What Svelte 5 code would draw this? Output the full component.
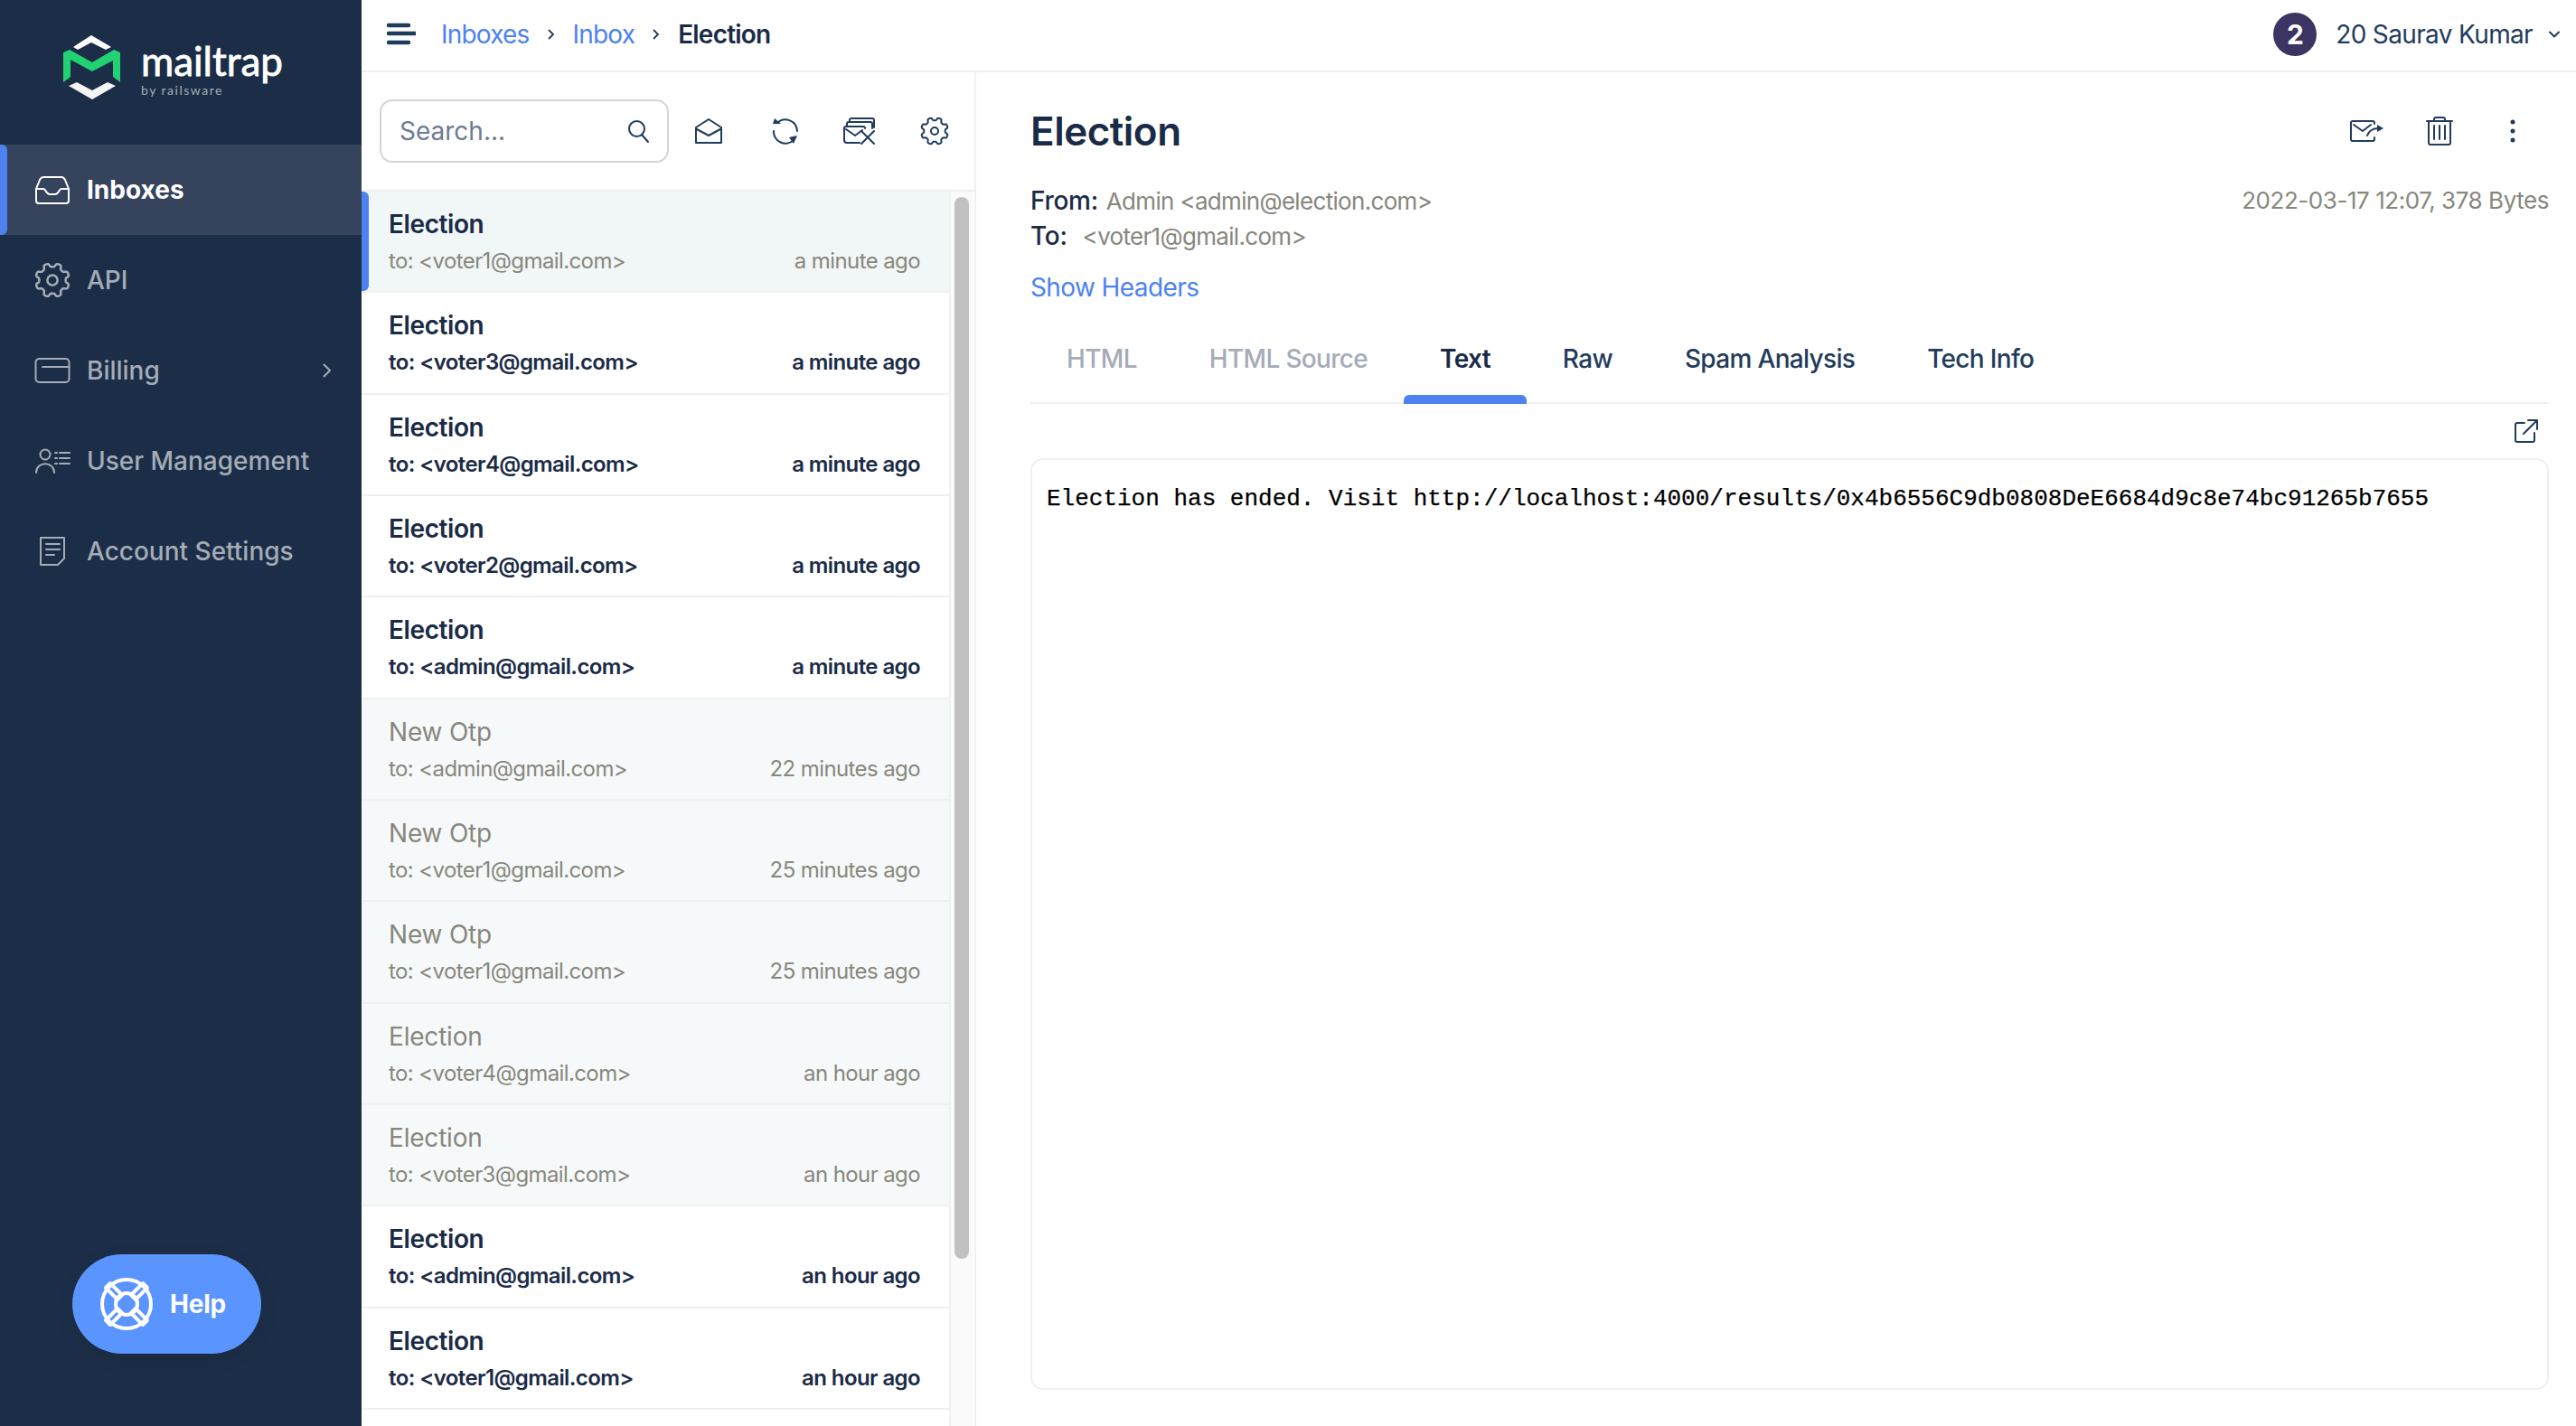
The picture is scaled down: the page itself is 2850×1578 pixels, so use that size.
<script>
  // message list
  const messages = [
    { subject: 'Election', to: 'voter1', ago: 'a minute ago', read: true, active: true },
    { subject: 'Election', to: 'voter3', ago: 'a minute ago' },
    { subject: 'Election', to: 'voter4', ago: 'a minute ago' },
    { subject: 'Election', to: 'voter2', ago: 'a minute ago' },
    { subject: 'Election', to: 'admin', ago: 'a minute ago' },
    { subject: 'New Otp', to: 'admin', ago: '22 minutes ago', read: true },
    { subject: 'New Otp', to: 'voter1', ago: '25 minutes ago', read: true },
    { subject: 'New Otp', to: 'voter1', ago: '25 minutes ago', read: true },
    { subject: 'Election', to: 'voter4', ago: 'an hour ago', read: true },
    { subject: 'Election', to: 'voter3', ago: 'an hour ago', read: true },
    { subject: 'Election', to: 'admin', ago: 'an hour ago' },
    { subject: 'Election', to: 'voter1', ago: 'an hour ago' }
  ];

  const tabs = ['HTML', 'HTML Source', 'Text', 'Raw', 'Spam Analysis', 'Tech Info'];

  // scalloped gear outline, 8 lobes round (16,16)
  function gear_path() {
    const pts = [];
    for (let i = 0; i < 160; i++) {
      const a = (i / 160) * Math.PI * 2;
      const r = 13.4 + 1.7 * Math.tanh(2.2 * Math.cos(8 * a + Math.PI / 8 * 8));
      pts.push(`${(16 + r * Math.cos(a)).toFixed(2)} ${(16 + r * Math.sin(a)).toFixed(2)}`);
    }
    return `M${pts.join('L')}Z`;
  }
  const gear = gear_path();
</script>

<div class="page">
  <aside class="sidebar">
    <div class="logo">
      <svg width="66" height="74" viewBox="0 0 66 74">
        <path d="M32 1 54 14 48 17 32 9 17 17 12 14Z" fill="#fff" />
        <path d="M1 20 8 17 33 31 57 17 64 20V53L56 47V29L33 41 9 28V47L1 53Z" fill="#22d172" />
        <path d="M7 57 16 53 33 62 50 53 59 57 33 72Z" fill="#f4f4f4" />
      </svg>
      <div class="wordmark">
        <span class="word">mailtrap</span>
        <span class="by">by railsware</span>
      </div>
    </div>

    <nav class="nav">
      <div class="nav-item active">
        <svg width="40" height="32" viewBox="0 0 40 32" class="stroke">
          <path d="M10 2h20c2 0 3 1 4 3l4 10v13a3 3 0 0 1-3 3H5a3 3 0 0 1-3-3V15L6 5c1-2 2-3 4-3z" />
          <path d="M2 15h8c3 0 3 6 7 6h6c4 0 4-6 7-6h8" />
        </svg>
        <span>Inboxes</span>
      </div>
      <div class="nav-item">
        <svg width="40" height="40" viewBox="0 0 32 32" class="stroke thin"><path d={gear} /><circle cx="16" cy="16" r="4.500" /></svg>
        <span>API</span>
      </div>
      <div class="nav-item">
        <svg width="40" height="30" viewBox="0 0 40 30" class="stroke">
          <rect x="1.500" y="2" width="37" height="26" rx="4" />
          <path d="M9 11h29.500" />
        </svg>
        <span>Billing</span>
        <svg class="chev stroke" width="10" height="16" viewBox="0 0 10 16"><path d="M1.500 1.500 8 8l-6.500 6.500" /></svg>
      </div>
      <div class="nav-item">
        <svg width="40" height="30" viewBox="0 0 40 30" class="stroke">
          <circle cx="12" cy="8" r="5.500" />
          <path d="M2 28c0-13 20-13 20 0" />
          <path d="M28 6h11M28 12h11M28 18h11" />
          <path d="M23 6h2M23 12h2M23 18h2" />
        </svg>
        <span>User Management</span>
      </div>
      <div class="nav-item">
        <svg width="40" height="34" viewBox="0 0 40 34" class="stroke">
          <path d="M7 2h26v23l-7 7H7z" />
          <path d="M13 9h15M13 15h15M13 21h9" />
        </svg>
        <span>Account Settings</span>
      </div>
    </nav>

    <div class="help">
      <svg width="60" height="60" viewBox="0 0 60 60" class="help-icon">
        <circle cx="30" cy="30" r="27" />
        <circle cx="30" cy="30" r="12" />
        <path d="M7 12 12 7 25 20 20 25zM48 7l5 5-13 13-5-5zM53 48l-5 5-13-13 5-5zM12 53l-5-5 13-13 5 5z" />
      </svg>
      <span>Help</span>
    </div>
  </aside>

  <div class="main">
    <header class="topbar">
      <svg class="burger" width="32" height="26" viewBox="0 0 32 26">
        <path d="M2 3h22M2 12h30M2 22h22" />
      </svg>
      <span class="crumb">Inboxes</span>
      <svg class="sep" width="8" height="14" viewBox="0 0 8 14"><path d="M1 2l5 5-5 5" /></svg>
      <span class="crumb">Inbox</span>
      <svg class="sep" width="8" height="14" viewBox="0 0 8 14"><path d="M1 2l5 5-5 5" /></svg>
      <span class="crumb current">Election</span>
      <div class="user">
        <span class="avatar">2</span>
        <span class="user-name">20 Saurav Kumar</span>
        <svg width="12" height="8" viewBox="0 0 12 8" class="icon"><path d="M1 1.500 6 6.500 11 1.500" /></svg>
      </div>
    </header>

    <div class="body">
      <section class="list-panel">
        <div class="toolbar">
          <div class="search">
            <span class="placeholder">Search...</span>
            <svg width="26" height="28" viewBox="0 0 26 28" class="icon">
              <circle cx="11.500" cy="11.500" r="8.500" />
              <path d="M17.500 18.500 24 26" />
            </svg>
          </div>
          <svg width="30" height="28" viewBox="0 0 30 28" class="icon t1">
            <path d="M15 1 1 10v17h28V10z" />
            <path d="M2 12l13 7 13-7" />
          </svg>
          <svg width="30" height="30" viewBox="0 0 30 30" class="icon t2">
            <path d="M6 6a13 13 0 0 1 22 9M2 15a13 13 0 0 0 22 10" />
            <path d="M1 7l2-6 7 6zM28 20l-9 2 5 7z" class="solid" />
          </svg>
          <svg width="36" height="30" viewBox="0 0 36 30" class="icon t3">
            <path d="M1 25V12a2 2 0 0 1 2-2h19a2 2 0 0 1 2 2M1 25a3 3 0 0 0 3 3h14" />
            <path d="M4 10V7a2 2 0 0 1 2-2h24a2 2 0 0 1 2 2v5" />
            <path d="M7 5V3a2 2 0 0 1 2-2h23a2 2 0 0 1 2 2v8" />
            <path d="M3 13l10 7 8-6" />
            <path d="M20 15l14 14M34 15 20 29" />
          </svg>
          <svg width="32" height="32" viewBox="0 0 32 32" class="icon t4"><path d={gear} /><circle cx="16" cy="16" r="4" /></svg>
        </div>

        <div class="list-wrap">
          <ul class="list">
            {#each messages as m}
              <li class="row" class:read={m.read} class:active={m.active}>
                <div class="subject">{m.subject}</div>
                <div class="meta">
                  <span>to: &lt;{m.to}@gmail.com&gt;</span>
                  <span>{m.ago}</span>
                </div>
              </li>
            {/each}
          </ul>
          <div class="scrollbar"><div class="thumb"></div></div>
        </div>
      </section>

      <section class="detail">
        <div class="title-row">
          <h1>Election</h1>
          <div class="actions">
            <svg width="38" height="24" viewBox="0 0 38 24" class="icon">
              <path d="M27 4V3a2 2 0 0 0-2-2H3a2 2 0 0 0-2 2v18a2 2 0 0 0 2 2h22a2 2 0 0 0 2-2v-2" />
              <path d="M4 5l10 7 9-7" />
              <path d="M19 17c2-5 6-8 12-8" />
              <path d="M30 5l7 4-7 4z" class="solid" />
            </svg>
            <svg width="30" height="32" viewBox="0 0 30 32" class="icon">
              <path d="M1 5h28M9 5V3a2 2 0 0 1 2-2h8a2 2 0 0 1 2 2v2" />
              <path d="M3 5v24a2 2 0 0 0 2 2h20a2 2 0 0 0 2-2V5" />
              <path d="M9 10v15M15 10v15M21 10v15" />
            </svg>
            <svg width="6" height="26" viewBox="0 0 6 26" class="dots">
              <circle cx="3" cy="3" r="2.500" /><circle cx="3" cy="13" r="2.500" /><circle cx="3" cy="23" r="2.500" />
            </svg>
          </div>
        </div>

        <div class="head-row">
          <div>
            <div class="addr"><b>From:</b><span class="from">Admin &lt;admin@election.com&gt;</span></div>
            <div class="addr"><b>To:</b><span class="to">&lt;voter1@gmail.com&gt;</span></div>
          </div>
          <div class="stamp">2022-03-17 12:07, 378 Bytes</div>
        </div>

        <div class="show">Show Headers</div>

        <div class="tabs">
          {#each tabs as t}
            <div class="tab" class:on={t === 'Text'} class:muted={t === 'HTML' || t === 'HTML Source'}>{t}</div>
          {/each}
        </div>

        <div class="open-row">
          <svg width="26" height="26" viewBox="0 0 26 26" class="icon">
            <path d="M11 4H3a2 2 0 0 0-2 2v17a2 2 0 0 0 2 2h17a2 2 0 0 0 2-2v-8" />
            <path d="M10 16 24 2M15 1h10v10" />
          </svg>
        </div>

        <div class="text-box">
          <pre>Election has ended. Visit http://localhost:4000/results/0x4b6556C9db0808DeE6684d9c8e74bc91265b7655</pre>
        </div>
      </section>
    </div>
  </div>
</div>

<style>
  :global(body) {
    margin: 0;
    background: #fff;
  }

  .page {
    display: flex;
    width: 2850px;
    height: 1578px;
    overflow: hidden;
    font-family: Inter, "Liberation Sans", sans-serif;
    color: #1a2b47;
  }

  /* sidebar */
  .sidebar {
    width: 400px;
    flex: none;
    display: flex;
    flex-direction: column;
    background: #1c2e47;
  }

  .logo {
    height: 160px;
    box-sizing: border-box;
    padding: 38px 0 0 69px;
    display: flex;
    gap: 21px;
    color: #fff;
  }

  .wordmark {
    display: flex;
    flex-direction: column;
    padding-top: 8px;
  }

  .word {
    font-family: Lato, sans-serif;
    font-size: 44px;
    line-height: 42px;
    font-weight: 400;
    -webkit-text-stroke: 0.8px #fff;
  }

  .by {
    font-family: Lato, sans-serif;
    font-size: 14px;
    line-height: 17px;
    letter-spacing: 1.500px;
    margin-top: 3px;
    color: #a4acb7;
  }

  .nav {
    display: flex;
    flex-direction: column;
  }

  .nav-item {
    height: 100px;
    display: flex;
    align-items: center;
    box-sizing: border-box;
    position: relative;
    padding-left: 96px;
    font-size: 28px;
    font-weight: 500;
    color: #a4acb7;
  }

  .nav-item svg:first-child {
    position: absolute;
    left: 38px;
    top: 50%;
    transform: translateY(-50%);
  }

  .nav-item.active {
    background: #36435d;
    color: #fff;
    font-weight: 700;
  }

  .nav-item.active::before,
  .row.active::before {
    content: "";
    position: absolute;
    left: 0;
    top: 0;
    bottom: 0;
    width: 8px;
    background: #4d82f0;
    border-radius: 0 6px 6px 0;
  }

  .stroke {
    fill: none;
    stroke: currentColor;
    stroke-width: 2;
    stroke-linejoin: round;
    stroke-linecap: round;
  }

  .chev {
    margin-left: auto;
    margin-right: 33px;
  }

  .help {
    margin: auto 0 80px 80px;
    width: 209px;
    height: 110px;
    border-radius: 55px;
    box-sizing: border-box;
    padding-left: 30px;
    display: flex;
    align-items: center;
    gap: 18px;
    background: #5a94ff;
    color: #fff;
    font-size: 28px;
    font-weight: 700;
    letter-spacing: -0.2px;
    box-shadow: 0 6px 20px rgba(0, 0, 0, 0.1);
  }

  .help-icon {
    fill: none;
    stroke: #fff;
    stroke-width: 4;
    stroke-linejoin: round;
  }

  /* top bar */
  .main {
    flex: 1;
    min-width: 0;
    display: flex;
    flex-direction: column;
  }

  .topbar {
    height: 80px;
    flex: none;
    box-sizing: border-box;
    border-bottom: 2px solid #f0f0f0;
    padding: 0 18px 2px 28px;
    display: flex;
    align-items: center;
    font-size: 28px;
    letter-spacing: -0.8px;
  }

  .burger {
    fill: none;
    stroke: #1f3c5c;
    stroke-width: 4.500;
    stroke-linecap: round;
    margin-right: 28px;
  }

  .crumb {
    color: #4d82f0;
  }

  .crumb.current {
    color: #1a2b47;
    font-weight: 600;
  }

  .sep {
    margin: 0 20px;
    fill: none;
    stroke: #1f3c5c;
    stroke-width: 1.800;
  }

  .user {
    margin-left: auto;
    display: flex;
    align-items: center;
    color: #1f3c5c;
    font-size: 28px;
    letter-spacing: -0.65px;
  }

  .avatar {
    width: 48px;
    height: 48px;
    border-radius: 50%;
    background: #3c3462;
    color: #fff;
    font-size: 30px;
    font-weight: 700;
    display: flex;
    align-items: center;
    justify-content: center;
    margin-right: 21px;
  }

  .user-name {
    margin-right: 18px;
  }

  .icon {
    fill: none;
    stroke: #1f3c5c;
    stroke-width: 2;
    stroke-linejoin: round;
    stroke-linecap: round;
    flex: none;
  }

  .solid {
    fill: #1f3c5c;
    stroke: none;
  }

  .body {
    flex: 1;
    min-height: 0;
    display: flex;
  }

  /* list panel */
  .list-panel {
    width: 680px;
    flex: none;
    box-sizing: border-box;
    border-right: 2px solid #f0f0f0;
    display: flex;
    flex-direction: column;
  }

  .toolbar {
    height: 132px;
    flex: none;
    box-sizing: border-box;
    padding: 0 20px;
    display: flex;
    align-items: center;
    border-bottom: 2px solid #f0f0f0;
  }

  .search {
    width: 320px;
    height: 70px;
    box-sizing: border-box;
    border: 2px solid #d2d5d9;
    border-radius: 14px;
    padding: 0 19px 0 20px;
    display: flex;
    align-items: center;
    justify-content: space-between;
    flex: none;
  }

  .placeholder {
    font-size: 28px;
    color: #6b7c93;
  }

  .t1 {
    margin-left: 29px;
  }

  .t2 {
    margin-left: 55px;
  }

  .t3 {
    margin-left: 49px;
  }

  .t4 {
    margin-left: 49px;
  }

  .list-wrap {
    flex: 1;
    min-height: 0;
    display: flex;
  }

  .list {
    list-style: none;
    margin: 0;
    padding: 0;
    width: 650px;
    flex: none;
  }

  .row {
    position: relative;
    height: 112.350px;
    box-sizing: border-box;
    border-bottom: 2px solid #f0f0f0;
    padding: 18px 32px 0 30px;
    font-weight: 500;
  }

  .row.read {
    background: #f6f9f9;
    font-weight: 400;
    color: #87877d;
  }

  .row.active {
    background: #f1f6f6;
  }

  .subject {
    font-size: 28px;
    line-height: 36px;
    font-weight: 600;
    letter-spacing: -0.4px;
  }

  .row.read .subject {
    font-weight: 400;
    letter-spacing: -0.2px;
  }

  .row.active .subject {
    font-weight: 600;
    letter-spacing: -0.4px;
    color: #1a2b47;
  }

  .meta {
    display: flex;
    justify-content: space-between;
    font-size: 24px;
    line-height: 30px;
    margin-top: 8px;
    font-weight: 600;
    letter-spacing: -0.6px;
  }

  .row.read .meta {
    font-weight: 400;
  }

  .scrollbar {
    width: 26px;
    flex: none;
    box-sizing: border-box;
    background: #fafafa;
    border-left: 2px solid #f0f0f0;
    padding: 6px 4px 0 4px;
  }

  .thumb {
    height: 1175px;
    border-radius: 8px;
    background: #c1c1c1;
  }

  /* detail */
  .detail {
    flex: 1;
    min-width: 0;
    box-sizing: border-box;
    padding: 0 30px 40px 60px;
    display: flex;
    flex-direction: column;
  }

  .title-row {
    display: flex;
    align-items: center;
    justify-content: space-between;
    height: 80px;
    margin-top: 25px;
  }

  h1 {
    margin: 0;
    font-size: 44px;
    line-height: 56px;
    font-weight: 600;
    letter-spacing: -0.5px;
  }

  .actions {
    display: flex;
    align-items: center;
    gap: 46px;
    margin-right: 37px;
  }

  .dots {
    fill: #1f3c5c;
    margin-left: 17px;
  }

  .head-row {
    display: flex;
    justify-content: space-between;
    align-items: flex-start;
    margin-top: 18px;
    font-size: 26px;
    line-height: 38px;
    letter-spacing: -0.68px;
  }

  .addr b {
    font-size: 28px;
    font-weight: 500;
    margin-right: 9px;
    letter-spacing: -0.3px;
  }

  .from,
  .to,
  .stamp {
    color: #87877d;
  }

  .to {
    margin-left: 8px;
  }

  .stamp {
    letter-spacing: -0.45px;
  }

  .show {
    margin-top: 19px;
    color: #4d82f0;
    font-size: 28px;
    line-height: 36px;
    letter-spacing: -0.6px;
  }

  .tabs {
    display: flex;
    margin-top: 31px;
    height: 78px;
    border-bottom: 2px solid #f0f0f0;
    font-size: 28px;
    font-weight: 500;
    letter-spacing: -0.68px;
  }

  .tab {
    padding: 12px 40px 0;
    line-height: 36px;
    color: #1f3c5c;
    position: relative;
  }

  .tab.muted {
    color: #a4acb7;
  }

  .tab.on {
    color: #1a2b47;
    font-weight: 600;
  }

  .tab.on::after {
    content: "";
    position: absolute;
    left: 0;
    right: 0;
    bottom: -2px;
    height: 10px;
    background: #4d82f0;
    border-radius: 6px 6px 0 0;
  }

  .open-row {
    display: flex;
    justify-content: flex-end;
    padding: 17px 12px 0 0;
    height: 60px;
    box-sizing: border-box;
  }

  .text-box {
    flex: 1;
    min-height: 0;
    border: 2px solid #f0f0f0;
    border-radius: 14px;
    padding: 25px 16px;
  }

  pre {
    margin: 0;
    font-family: "Liberation Mono", monospace;
    font-size: 26px;
    line-height: 36px;
    color: #000;
    -webkit-text-stroke: 0.25px #000;
  }
</style>
